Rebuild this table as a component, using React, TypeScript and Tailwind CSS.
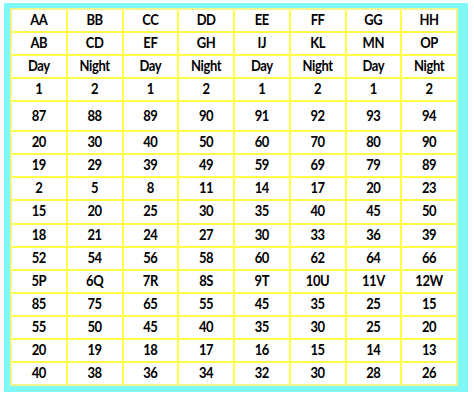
const rows: string[][] = [
  ["AA", "BB", "CC", "DD", "EE", "FF", "GG", "HH"],
  ["AB", "CD", "EF", "GH", "IJ", "KL", "MN", "OP"],
  ["Day", "Night", "Day", "Night", "Day", "Night", "Day", "Night"],
  ["1", "2", "1", "2", "1", "2", "1", "2"],
  ["87", "88", "89", "90", "91", "92", "93", "94"],
  ["20", "30", "40", "50", "60", "70", "80", "90"],
  ["19", "29", "39", "49", "59", "69", "79", "89"],
  ["2", "5", "8", "11", "14", "17", "20", "23"],
  ["15", "20", "25", "30", "35", "40", "45", "50"],
  ["18", "21", "24", "27", "30", "33", "36", "39"],
  ["52", "54", "56", "58", "60", "62", "64", "66"],
  ["5P", "6Q", "7R", "8S", "9T", "10U", "11V", "12W"],
  ["85", "75", "65", "55", "45", "35", "25", "15"],
  ["55", "50", "45", "40", "35", "30", "25", "20"],
  ["20", "19", "18", "17", "16", "15", "14", "13"],
  ["40", "38", "36", "34", "32", "30", "28", "26"],
];

export default function App() {
  return (
    <div className="w-[474px] h-[401px] bg-white pl-[4px] pt-[3px]">
      <div className="w-[464px] h-[389px] bg-[#7ef8f8] pl-[6px] pt-[5px] pr-[10px] pb-[6px]">
        <div className="h-full border-2 border-[#f4f48c] bg-[#ffff48]">
          <div className="h-full grid grid-cols-8 grid-rows-[repeat(4,minmax(0,1fr))_28px_repeat(11,minmax(0,1fr))] gap-[2px] font-['Lato',sans-serif] text-[13px] font-bold text-black tracking-[-0.4px]">
            {rows.flatMap((r, i) =>
              r.map((c, j) => (
                <div key={i + "-" + j} className="bg-white flex items-center justify-center leading-none">
                  <span className="inline-block scale-y-110">{c}</span>
                </div>
              ))
            )}
          </div>
        </div>
      </div>
    </div>
  );
}
